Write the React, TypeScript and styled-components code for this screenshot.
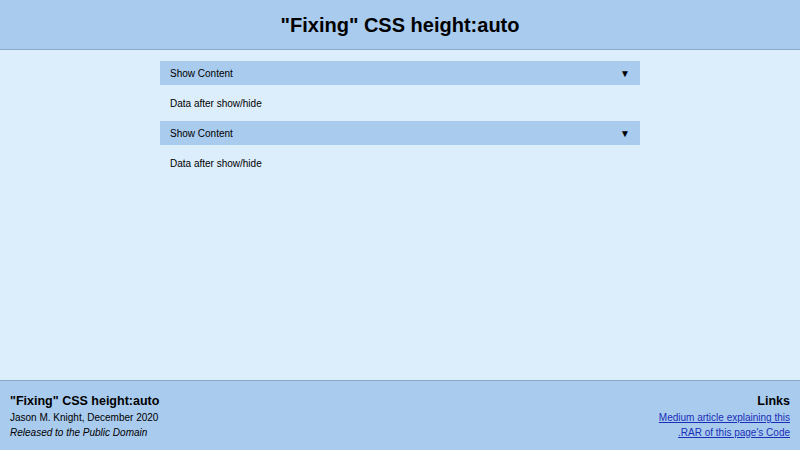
import styled, { createGlobalStyle } from 'styled-components';

const GlobalStyle = createGlobalStyle`
    html, body {
        margin: 0;
        padding: 0;
        height: 100%;
    }
    body {
        font-family: "Liberation Sans", Arial, sans-serif;
        background-color: #dcedfc;
        color: #000;
    }
    #root {
        height: 100%;
    }
`;

const sections = [1, 2];

export default function App() {
    return (
        <>
            <GlobalStyle />
            <Page>
                <Header>
                    <Title>"Fixing" CSS height:auto</Title>
                </Header>
                <Main>
                    {sections.map((n) => (
                        <Section key={n}>
                            <Toggle>
                                <span>Show Content</span>
                                <Arrow>▼</Arrow>
                            </Toggle>
                            <After>Data after show/hide</After>
                        </Section>
                    ))}
                </Main>
                <Footer>
                    <FooterBlock>
                        <FooterHeading>"Fixing" CSS height:auto</FooterHeading>
                        <FooterLine>Jason M. Knight, December 2020</FooterLine>
                        <FooterLine as="i">Released to the Public Domain</FooterLine>
                    </FooterBlock>
                    <FooterBlock $right>
                        <FooterHeading>Links</FooterHeading>
                        <FooterLink href="#">Medium article explaining this</FooterLink>
                        <FooterLink href="#">.RAR of this page's Code</FooterLink>
                    </FooterBlock>
                </Footer>
            </Page>
        </>
    );
}

// Styled Components
const Page = styled.div`
    display: flex;
    flex-direction: column;
    min-height: 100%;
`;

const Header = styled.header`
    height: 48px;
    padding-top: 1px;
    display: flex;
    align-items: center;
    justify-content: center;
    background-color: #a9cbee;
    border-bottom: 1px solid #8aa8c6;
`;

const Title = styled.h1`
    margin: 0;
    font-size: 20px;
    font-weight: bold;
`;

const Main = styled.main`
    flex: 1;
    width: 480px;
    margin: 0 auto;
    padding-top: 11px;
`;

const Section = styled.section`
    display: flex;
    flex-direction: column;
`;

const Toggle = styled.div`
    height: 24px;
    display: flex;
    align-items: center;
    justify-content: space-between;
    padding: 0 10px;
    background-color: #a9cbee;
    font-size: 10px;
`;

const Arrow = styled.span`
    font-size: 10px;
`;

const After = styled.p`
    margin: 0;
    padding: 12px 10px 10px;
    font-size: 10px;
    line-height: 14px;
`;

const Footer = styled.footer`
    height: 69px;
    display: flex;
    justify-content: space-between;
    padding: 0 10px;
    background-color: #a9cbee;
    border-top: 1px solid #8aa8c6;
    box-sizing: content-box;
`;

const FooterBlock = styled.div<{ $right?: boolean }>`
    display: flex;
    flex-direction: column;
    align-items: ${(p) => (p.$right ? 'flex-end' : 'flex-start')};
    padding-top: 11px;
`;

const FooterHeading = styled.h2`
    margin: 0;
    font-size: 12.5px;
    line-height: 18px;
    font-weight: bold;
`;

const FooterLine = styled.span`
    font-size: 10px;
    line-height: 15px;
`;

const FooterLink = styled.a`
    font-size: 10px;
    line-height: 15px;
    color: #1a2fb8;
    text-decoration: underline;
`;
